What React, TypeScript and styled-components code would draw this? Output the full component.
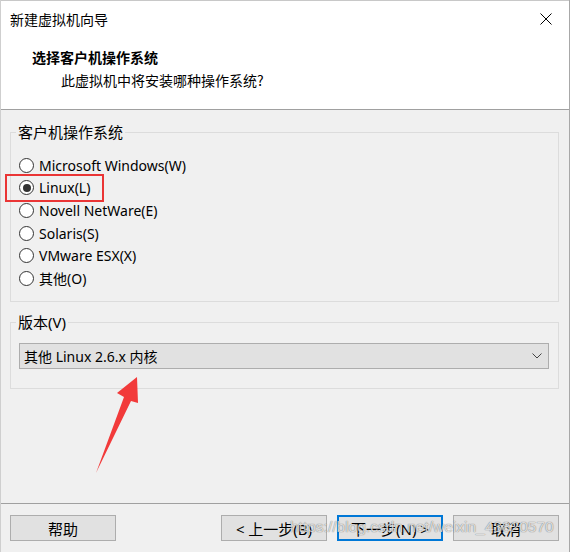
import React from 'react';
import styled, {createGlobalStyle} from "styled-components";

const GlobalStyle = createGlobalStyle`
  html, body {
    margin: 0;
    padding: 0;
    background: #f0f0f0;
  }
  body {
    font-family: "Noto Sans", "Noto Sans CJK SC", sans-serif;
    color: #000;
  }
`

const osList = [
    'Microsoft Windows(W)',
    'Linux(L)',
    'Novell NetWare(E)',
    'Solaris(S)',
    'VMware ESX(X)',
    '其他(O)',
]

const App = () => {
    const selected = 'Linux(L)'

    return (
        <Window>
            <GlobalStyle/>
            <Header>
                <TitleBar>
                    <Title>新建虚拟机向导</Title>
                    <CloseButton>
                        <svg width="12" height="12" viewBox="0 0 12 12">
                            <path d="M0.5 0.5 L11.5 11.5 M11.5 0.5 L0.5 11.5" stroke="#000" strokeWidth="1" fill="none"/>
                        </svg>
                    </CloseButton>
                </TitleBar>
                <Heading>选择客户机操作系统</Heading>
                <SubHeading>此虚拟机中将安装哪种操作系统?</SubHeading>
            </Header>

            <Body>
                <Group $height={180} $padTop={12}>
                    <Legend>客户机操作系统</Legend>
                    {osList.map(os => (
                        <RadioRow key={os}>
                            <Radio $checked={os === selected}/>
                            <span>{os}</span>
                        </RadioRow>
                    ))}
                </Group>

                <Group $marginTop={10} $padTop={11} $padBottom={19}>
                    <Legend>版本(V)</Legend>
                    <Select>
                        <span>其他 Linux 2.6.x 内核</span>
                        <svg width="10" height="6" viewBox="0 0 10 6">
                            <path d="M0.5 0.5 L5 5 L9.5 0.5" stroke="#444" strokeWidth="1" fill="none"/>
                        </svg>
                    </Select>
                </Group>
            </Body>

            <Footer>
                <Button>帮助</Button>
                <Spacer/>
                <Button>&lt; 上一步(B)</Button>
                <Button $primary>下一步(N) &gt;</Button>
                <Button>取消</Button>
            </Footer>

            <Highlight/>
            <Arrow width="50" height="110" viewBox="0 0 50 110">
                <polygon points="47,7 27,23 34,27 6,103 41,31 48,33" fill="#f23a3a"/>
            </Arrow>
            <Watermark>https://blog.csdn.net/weixin_43820570</Watermark>
        </Window>
    )
};

export default App;

const Window = styled.div`
  position: relative;
  width: 570px;
  height: 552px;
  box-sizing: border-box;
  display: flex;
  flex-direction: column;
  background: #f0f0f0;
  border-right: 1px solid #a8a8a8;
  border-left: 1px solid #cfcfcf;
  overflow: hidden;
`

const Header = styled.div`
  background: #fff;
  height: 110px;
  box-sizing: border-box;
  border-bottom: 1px solid #a0a0a0;
  border-top: 1px solid #c8c8c8;
`

const TitleBar = styled.div`
  display: flex;
  align-items: center;
  justify-content: space-between;
  height: 36px;
  padding-left: 9px;
`

const Title = styled.div`
  font-family: "Noto Sans CJK SC", sans-serif;
  font-size: 14px;
  line-height: 20px;
`

const CloseButton = styled.div`
  width: 46px;
  height: 36px;
  display: flex;
  align-items: center;
  justify-content: center;
`

const Heading = styled.div`
  font-family: "Noto Sans CJK SC", sans-serif;
  font-weight: 700;
  font-size: 14px;
  line-height: 20px;
  margin-top: 10px;
  padding-left: 31px;
`

const SubHeading = styled.div`
  font-family: "Noto Sans CJK SC", sans-serif;
  font-size: 14px;
  line-height: 20px;
  margin-top: 3px;
  padding-left: 60px;
`

const Body = styled.div`
  flex: 1;
  padding: 0 10px 0 9px;
`

const Group = styled.fieldset<{ $height?: number, $marginTop?: number, $padTop?: number, $padBottom?: number }>`
  margin: ${props => props.$marginTop ?? 12}px 0 0 0;
  min-width: 0;
  box-sizing: border-box;
  height: ${props => props.$height ? props.$height + 'px' : 'auto'};
  border: 1px solid #dcdcdc;
  padding: ${props => props.$padTop ?? 0}px 9px ${props => props.$padBottom ?? 0}px 8px;
`

const Legend = styled.legend`
  font-size: 15px;
  line-height: 20px;
  padding: 0 2px;
  margin-left: -3px;
  color: #000;
`

const RadioRow = styled.div`
  display: flex;
  align-items: center;
  gap: 5px;
  height: 22.6px;
  font-size: 14px;
  white-space: nowrap;
`

const Radio = styled.span<{ $checked?: boolean }>`
  width: 15px;
  height: 15px;
  box-sizing: border-box;
  border-radius: 50%;
  border: 1px solid #333;
  background: #fff;
  display: flex;
  align-items: center;
  justify-content: center;
  flex-shrink: 0;

  &::after {
    content: '';
    width: 8px;
    height: 8px;
    border-radius: 50%;
    background: ${props => props.$checked ? '#333' : 'transparent'};
  }
`

const Select = styled.div`
  height: 26px;
  box-sizing: border-box;
  background: #e1e1e1;
  border: 1px solid #adadad;
  display: flex;
  align-items: center;
  justify-content: space-between;
  padding: 0 6px 0 4px;
  font-size: 14px;
  white-space: nowrap;
`

const Footer = styled.div`
  height: 49px;
  box-sizing: border-box;
  border-top: 1px solid #a0a0a0;
  display: flex;
  align-items: flex-start;
  gap: 10px;
  padding: 11px 10px 0 9px;
`

const Spacer = styled.div`
  flex: 1;
`

const Button = styled.div<{ $primary?: boolean }>`
  width: 106px;
  height: 26px;
  box-sizing: border-box;
  background: #e1e1e1;
  border: ${props => props.$primary ? '2px solid #0078d7' : '1px solid #adadad'};
  display: flex;
  align-items: center;
  justify-content: center;
  font-size: 15px;
  white-space: nowrap;
`

const Highlight = styled.div`
  position: absolute;
  left: 4px;
  top: 174px;
  width: 99px;
  height: 28px;
  box-sizing: border-box;
  border: 2px solid #ea3535;
`

const Arrow = styled.svg`
  position: absolute;
  left: 89px;
  top: 370px;
`

const Watermark = styled.div`
  position: absolute;
  left: 289px;
  top: 517px;
  font-family: "Liberation Sans", sans-serif;
  font-size: 15.5px;
  line-height: 20px;
  color: rgba(255, 255, 255, 0.75);
  text-shadow: 0 0 1px rgba(0, 0, 0, 0.35), 0 0 1px rgba(0, 0, 0, 0.35);
  white-space: nowrap;
  pointer-events: none;
`
